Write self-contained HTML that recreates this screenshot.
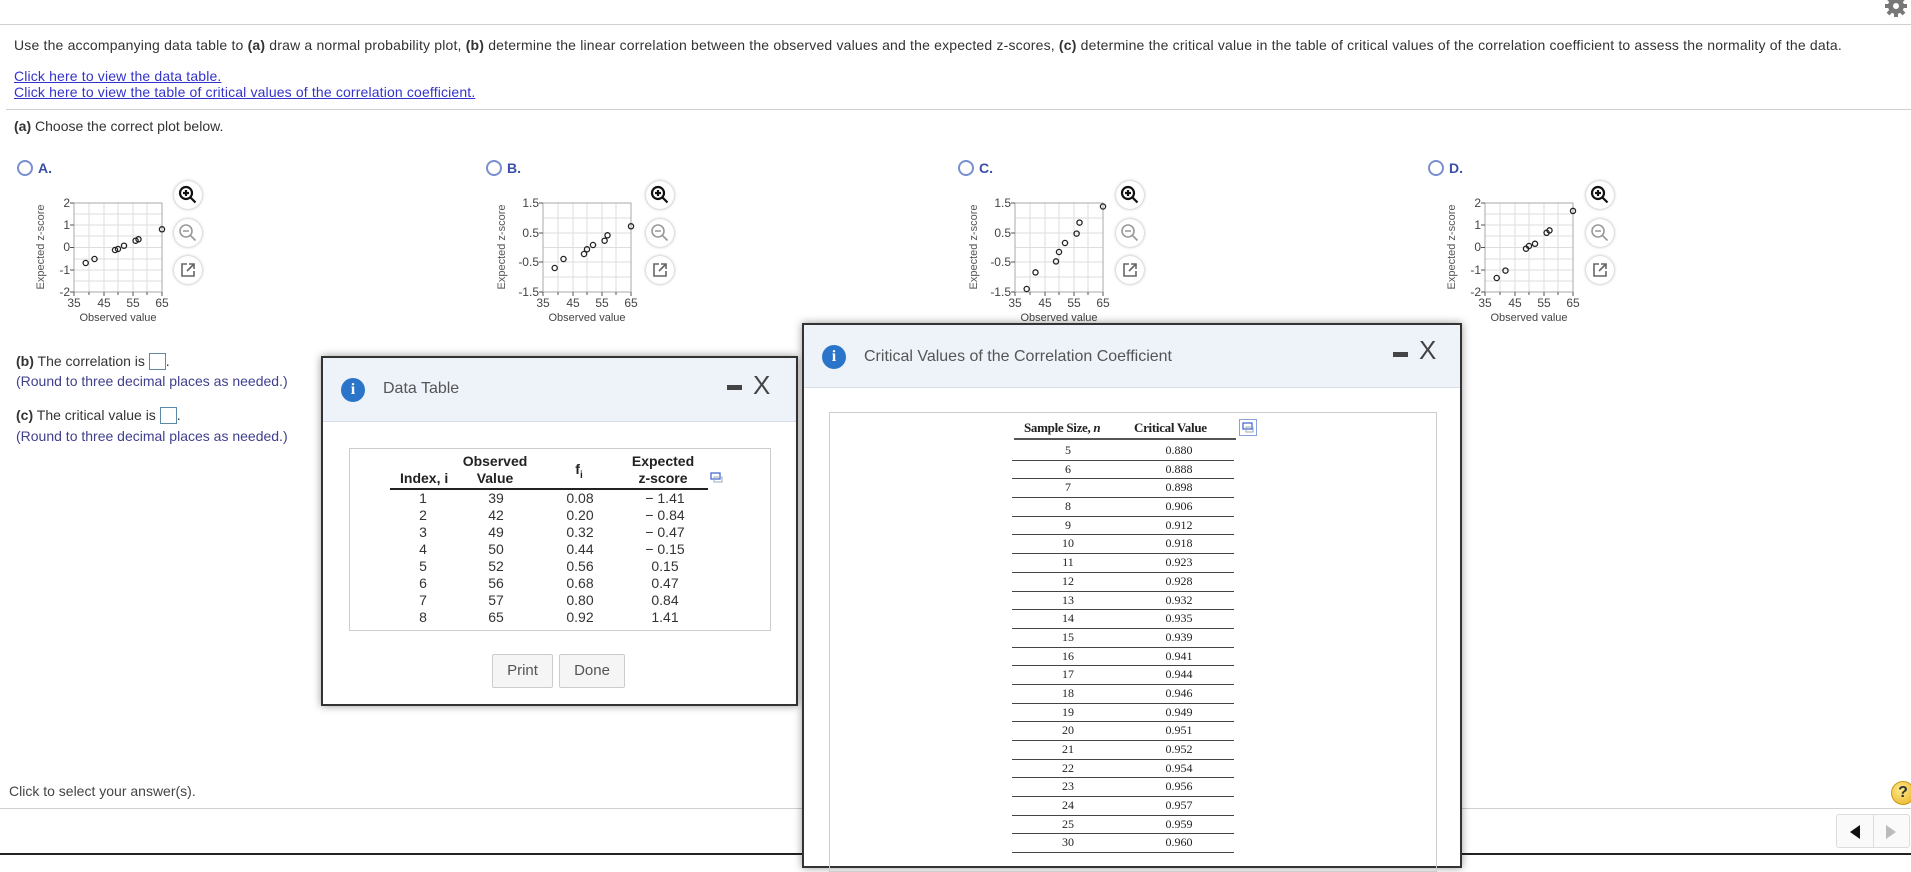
<!DOCTYPE html>
<html><head><meta charset="utf-8">
<style>
*{box-sizing:border-box;margin:0;padding:0}
body{width:1911px;height:855px;overflow:hidden;background:#fff;font-family:"Liberation Sans",Arial,sans-serif;color:#333;position:relative}
.a{position:absolute;white-space:nowrap}
.t{font-size:14px;line-height:16px}
.lnk{color:#3333cc;text-decoration:underline;font-size:14px;letter-spacing:0.15px}
.rd{position:absolute;width:16px;height:16px;border:2px solid #7a8fd0;border-radius:50%}
.ol{position:absolute;font-size:14px;font-weight:bold;color:#3b4fa8}
.ic{position:absolute;width:28px;height:28px;border-radius:50%;background:#fff;box-shadow:0 0 3px rgba(0,0,0,.35)}
.ic svg{position:absolute;left:0;top:0}
.dlg{position:absolute;background:#fff;border:2px solid #333;box-shadow:0 0 8px rgba(0,0,0,.4)}
.hd{position:absolute;left:0;right:0;top:0;background:#eef3fa;border-bottom:1px solid #d6dde8}
.info{position:absolute;width:24px;height:24px;border-radius:50%;background:#2a75c9;color:#fff;font:bold 16px/24px "Liberation Serif",serif;text-align:center}
.dt td{font-size:14px;line-height:17px;text-align:center;padding:0}
.btn{position:absolute;background:#f5f5f5;border:1px solid #ccc;border-radius:2px;font-size:15px;color:#555;text-align:center;line-height:32px}
.cr{height:18.7px;border-bottom:1px solid #444;display:flex;line-height:17px}
.cr span:first-child{width:112px;text-align:center}
.cr span:last-child{width:110px;text-align:center}
</style></head><body>

<svg class="a" style="left:1884px;top:-6px" width="24" height="24" viewBox="0 0 24 24"><circle cx="12" cy="12" r="8" fill="#777"/><g stroke="#777" stroke-width="4"><line x1="12" y1="1" x2="12" y2="23"/><line x1="1" y1="12" x2="23" y2="12"/><line x1="4" y1="4" x2="20" y2="20"/><line x1="20" y1="4" x2="4" y2="20"/></g><circle cx="12" cy="12" r="3" fill="#fff"/></svg>

<div class="a" style="left:0;top:24px;width:1911px;height:1px;background:#d0d0d0"></div>
<div class="a t" style="left:14px;top:37px;font-size:14px;letter-spacing:0.18px">Use the accompanying data table to <b>(a)</b> draw a normal probability plot, <b>(b)</b> determine the linear correlation between the observed values and the expected z-scores, <b>(c)</b> determine the critical value in the table of critical values of the correlation coefficient to assess the normality of the data.</div>
<div class="a lnk" style="left:14px;top:68px">Click here to view the data table.</div>
<div class="a lnk" style="left:14px;top:84px">Click here to view the table of critical values of the correlation coefficient.</div>
<div class="a" style="left:6px;top:109px;width:1905px;height:1px;background:#d0d0d0"></div>
<div class="a t" style="left:14px;top:118px"><b>(a)</b> Choose the correct plot below.</div>

<div class="rd" style="left:17px;top:160px"></div><div class="ol" style="left:38px;top:160px">A.</div>
<div class="rd" style="left:486px;top:160px"></div><div class="ol" style="left:507px;top:160px">B.</div>
<div class="rd" style="left:958px;top:160px"></div><div class="ol" style="left:979px;top:160px">C.</div>
<div class="rd" style="left:1428px;top:160px"></div><div class="ol" style="left:1449px;top:160px">D.</div>

<svg class="a" style="left:14px;top:150px" width="170" height="175" font-family="Liberation Sans,Arial,sans-serif">
<g stroke="#ddd"><path d="M75 53V142M90 53V142M104 53V142M119 53V142M133 53V142M60 64H148M60 75H148M60 86H148M60 97.5H148M60 109H148M60 120H148M60 131H148"/></g>
<rect x="60" y="53" width="88" height="89" fill="none" stroke="#aaa"/>
<path d="M56 53H60M56 75H60M56 97.5H60M56 120H60M56 142H60M60 142V146M75 142V145M90 142V146M104 142V145M119 142V146M133 142V145M148 142V146" stroke="#555"/>
<g font-size="12" fill="#444" text-anchor="end"><text x="56" y="57">2</text><text x="56" y="79">1</text><text x="56" y="101">0</text><text x="56" y="124">-1</text><text x="56" y="146">-2</text></g>
<g font-size="12" fill="#444" text-anchor="middle"><text x="60" y="157">35</text><text x="90" y="157">45</text><text x="119" y="157">55</text><text x="148" y="157">65</text><text x="104" y="171" font-size="11">Observed value</text></g>
<text transform="translate(30,97) rotate(-90)" font-size="11" fill="#555" text-anchor="middle">Expected z-score</text>
<g fill="none" stroke="#222" stroke-width="1.3"><circle cx="71.7" cy="113" r="2.6"/><circle cx="80.5" cy="109" r="2.6"/><circle cx="101" cy="100" r="2.6"/><circle cx="104" cy="99" r="2.6"/><circle cx="110" cy="95.7" r="2.6"/><circle cx="121.6" cy="90.7" r="2.6"/><circle cx="124.5" cy="89.3" r="2.6"/><circle cx="148" cy="79.3" r="2.6"/></g>
</svg>

<svg class="a" style="left:483px;top:150px" width="170" height="175" font-family="Liberation Sans,Arial,sans-serif">
<g stroke="#ddd"><path d="M75 53V142M90 53V142M104 53V142M119 53V142M133 53V142M60 68H148M60 83H148M60 97.5H148M60 112H148M60 127H148"/></g>
<rect x="60" y="53" width="88" height="89" fill="none" stroke="#aaa"/>
<path d="M56 53H60M56 83H60M56 112H60M56 142H60M60 142V146M75 142V145M90 142V146M104 142V145M119 142V146M133 142V145M148 142V146" stroke="#555"/>
<g font-size="12" fill="#444" text-anchor="end"><text x="56" y="57">1.5</text><text x="56" y="87">0.5</text><text x="56" y="116">-0.5</text><text x="56" y="146">-1.5</text></g>
<g font-size="12" fill="#444" text-anchor="middle"><text x="60" y="157">35</text><text x="90" y="157">45</text><text x="119" y="157">55</text><text x="148" y="157">65</text><text x="104" y="171" font-size="11">Observed value</text></g>
<text transform="translate(22,97) rotate(-90)" font-size="11" fill="#555" text-anchor="middle">Expected z-score</text>
<g fill="none" stroke="#222" stroke-width="1.3"><circle cx="71.7" cy="118" r="2.6"/><circle cx="80.5" cy="109" r="2.6"/><circle cx="101" cy="104" r="2.6"/><circle cx="104" cy="99.3" r="2.6"/><circle cx="110" cy="95" r="2.6"/><circle cx="121.6" cy="90.7" r="2.6"/><circle cx="124.5" cy="85.3" r="2.6"/><circle cx="148" cy="76.3" r="2.6"/></g>
</svg>

<svg class="a" style="left:955px;top:150px" width="170" height="175" font-family="Liberation Sans,Arial,sans-serif">
<g stroke="#ddd"><path d="M75 53V142M90 53V142M104 53V142M119 53V142M133 53V142M60 68H148M60 83H148M60 97.5H148M60 112H148M60 127H148"/></g>
<rect x="60" y="53" width="88" height="89" fill="none" stroke="#aaa"/>
<path d="M56 53H60M56 83H60M56 112H60M56 142H60M60 142V146M75 142V145M90 142V146M104 142V145M119 142V146M133 142V145M148 142V146" stroke="#555"/>
<g font-size="12" fill="#444" text-anchor="end"><text x="56" y="57">1.5</text><text x="56" y="87">0.5</text><text x="56" y="116">-0.5</text><text x="56" y="146">-1.5</text></g>
<g font-size="12" fill="#444" text-anchor="middle"><text x="60" y="157">35</text><text x="90" y="157">45</text><text x="119" y="157">55</text><text x="148" y="157">65</text><text x="104" y="171" font-size="11">Observed value</text></g>
<text transform="translate(22,97) rotate(-90)" font-size="11" fill="#555" text-anchor="middle">Expected z-score</text>
<g fill="none" stroke="#222" stroke-width="1.3"><circle cx="71.7" cy="139" r="2.6"/><circle cx="80.5" cy="122.4" r="2.6"/><circle cx="101" cy="111.4" r="2.6"/><circle cx="104" cy="102" r="2.6"/><circle cx="110" cy="93" r="2.6"/><circle cx="121.6" cy="83.6" r="2.6"/><circle cx="124.5" cy="72.6" r="2.6"/><circle cx="148" cy="56.5" r="2.6"/></g>
</svg>

<svg class="a" style="left:1425px;top:150px" width="170" height="175" font-family="Liberation Sans,Arial,sans-serif">
<g stroke="#ddd"><path d="M75 53V142M90 53V142M104 53V142M119 53V142M133 53V142M60 64H148M60 75H148M60 86H148M60 97.5H148M60 109H148M60 120H148M60 131H148"/></g>
<rect x="60" y="53" width="88" height="89" fill="none" stroke="#aaa"/>
<path d="M56 53H60M56 75H60M56 97.5H60M56 120H60M56 142H60M60 142V146M75 142V145M90 142V146M104 142V145M119 142V146M133 142V145M148 142V146" stroke="#555"/>
<g font-size="12" fill="#444" text-anchor="end"><text x="56" y="57">2</text><text x="56" y="79">1</text><text x="56" y="101">0</text><text x="56" y="124">-1</text><text x="56" y="146">-2</text></g>
<g font-size="12" fill="#444" text-anchor="middle"><text x="60" y="157">35</text><text x="90" y="157">45</text><text x="119" y="157">55</text><text x="148" y="157">65</text><text x="104" y="171" font-size="11">Observed value</text></g>
<text transform="translate(30,97) rotate(-90)" font-size="11" fill="#555" text-anchor="middle">Expected z-score</text>
<g fill="none" stroke="#222" stroke-width="1.3"><circle cx="71.7" cy="128" r="2.6"/><circle cx="80.5" cy="120.6" r="2.6"/><circle cx="101" cy="98.7" r="2.6"/><circle cx="104" cy="96" r="2.6"/><circle cx="110" cy="93.8" r="2.6"/><circle cx="121.6" cy="82.8" r="2.6"/><circle cx="124.5" cy="80.4" r="2.6"/><circle cx="148" cy="60.9" r="2.6"/></g>
</svg>

<div class="ic" style="left:174px;top:181px"><svg width="28" height="28"><circle cx="12" cy="12" r="6" fill="none" stroke="#111" stroke-width="2.2"/><path d="M16.5 16.5L21.5 21.5M9 12H15M12 9V15" stroke="#111" stroke-width="2.2"/></svg></div>
<div class="ic" style="left:174px;top:219px"><svg width="28" height="28"><circle cx="12" cy="12" r="6" fill="none" stroke="#999" stroke-width="1.6"/><path d="M16.5 16.5L21.5 21.5M9 12H15" stroke="#999" stroke-width="1.6"/></svg></div>
<div class="ic" style="left:174px;top:256px"><svg width="28" height="28"><path d="M13 8H8V20H20V15M15 8H20V13M20 8L13 15" fill="none" stroke="#666" stroke-width="1.6"/></svg></div>

<div class="ic" style="left:646px;top:181px"><svg width="28" height="28"><circle cx="12" cy="12" r="6" fill="none" stroke="#111" stroke-width="2.2"/><path d="M16.5 16.5L21.5 21.5M9 12H15M12 9V15" stroke="#111" stroke-width="2.2"/></svg></div>
<div class="ic" style="left:646px;top:219px"><svg width="28" height="28"><circle cx="12" cy="12" r="6" fill="none" stroke="#999" stroke-width="1.6"/><path d="M16.5 16.5L21.5 21.5M9 12H15" stroke="#999" stroke-width="1.6"/></svg></div>
<div class="ic" style="left:646px;top:256px"><svg width="28" height="28"><path d="M13 8H8V20H20V15M15 8H20V13M20 8L13 15" fill="none" stroke="#666" stroke-width="1.6"/></svg></div>

<div class="ic" style="left:1116px;top:181px"><svg width="28" height="28"><circle cx="12" cy="12" r="6" fill="none" stroke="#111" stroke-width="2.2"/><path d="M16.5 16.5L21.5 21.5M9 12H15M12 9V15" stroke="#111" stroke-width="2.2"/></svg></div>
<div class="ic" style="left:1116px;top:219px"><svg width="28" height="28"><circle cx="12" cy="12" r="6" fill="none" stroke="#999" stroke-width="1.6"/><path d="M16.5 16.5L21.5 21.5M9 12H15" stroke="#999" stroke-width="1.6"/></svg></div>
<div class="ic" style="left:1116px;top:256px"><svg width="28" height="28"><path d="M13 8H8V20H20V15M15 8H20V13M20 8L13 15" fill="none" stroke="#666" stroke-width="1.6"/></svg></div>

<div class="ic" style="left:1586px;top:181px"><svg width="28" height="28"><circle cx="12" cy="12" r="6" fill="none" stroke="#111" stroke-width="2.2"/><path d="M16.5 16.5L21.5 21.5M9 12H15M12 9V15" stroke="#111" stroke-width="2.2"/></svg></div>
<div class="ic" style="left:1586px;top:219px"><svg width="28" height="28"><circle cx="12" cy="12" r="6" fill="none" stroke="#999" stroke-width="1.6"/><path d="M16.5 16.5L21.5 21.5M9 12H15" stroke="#999" stroke-width="1.6"/></svg></div>
<div class="ic" style="left:1586px;top:256px"><svg width="28" height="28"><path d="M13 8H8V20H20V15M15 8H20V13M20 8L13 15" fill="none" stroke="#666" stroke-width="1.6"/></svg></div>

<div class="a t" style="left:16px;top:353px"><b>(b)</b> The correlation is <span style="display:inline-block;width:17px;height:17px;border:1px solid #5a8aa8;vertical-align:-4px"></span>.</div>
<div class="a t" style="left:16px;top:373px;color:#3f3f8f">(Round to three decimal places as needed.)</div>
<div class="a t" style="left:16px;top:407px"><b>(c)</b> The critical value is <span style="display:inline-block;width:17px;height:17px;border:1px solid #5a8aa8;vertical-align:-4px"></span>.</div>
<div class="a t" style="left:16px;top:428px;color:#3f3f8f">(Round to three decimal places as needed.)</div>
<div class="a t" style="left:9px;top:783px;color:#444">Click to select your answer(s).</div>

<div class="a" style="left:0;top:808px;width:1911px;height:1px;background:#d0d0d0"></div>
<div class="a" style="left:1891px;top:781px;width:24px;height:24px;border-radius:50%;background:radial-gradient(circle at 40% 35%,#ffe98a,#e8b020);border:1px solid #c99a18;font:bold 16px/22px 'Liberation Sans',sans-serif;color:#333;text-align:center">?</div>
<div class="a" style="left:1836px;top:814px;width:74px;height:34px;border:1px solid #ddd;border-radius:3px;background:#fafafa"></div>
<div class="a" style="left:1873px;top:815px;width:1px;height:32px;background:#ddd"></div>
<svg class="a" style="left:1846px;top:822px" width="60" height="20"><path d="M14 3L4 10L14 17Z" fill="#111"/><path d="M40 3L50 10L40 17Z" fill="#bbb"/></svg>
<div class="a" style="left:0;top:853px;width:1911px;height:2px;background:#222"></div>

<div class="dlg" style="left:321px;top:356px;width:477px;height:350px">
 <div class="hd" style="height:64px"></div>
 <div class="info" style="left:18px;top:20px">i</div>
 <div class="a" style="left:60px;top:22px;font-size:16px;color:#555">Data Table</div>
 <div class="a" style="left:404px;top:27px;width:15px;height:5px;background:#444"></div>
 <div class="a" style="left:430px;top:12px;font-size:26px;color:#444">X</div>
 <div class="a" style="left:26px;top:90px;width:422px;height:183px;border:1px solid #ccc"></div>
 <div class="a" style="left:67px;top:130px;width:318px;height:1.5px;background:#222"></div>
 <div class="a" style="left:0;top:96px;width:477px">
  <div class="a" style="left:77px;top:16px;width:46px;text-align:center;font-weight:bold;font-size:14px;color:#222">Index, i</div>
  <div class="a" style="left:132px;top:-1px;width:80px;text-align:center;font-weight:bold;font-size:14px;line-height:17px;color:#222">Observed<br>Value</div>
  <div class="a" style="left:246px;top:7px;width:20px;text-align:center;font-weight:bold;font-size:14px;color:#222">f<sub style="font-size:10px">i</sub></div>
  <div class="a" style="left:300px;top:-1px;width:80px;text-align:center;font-weight:bold;font-size:14px;line-height:17px;color:#222">Expected<br>z-score</div>
  <svg class="a" style="left:387px;top:18px" width="14" height="12"><rect x="1" y="1" width="9" height="6" fill="none" stroke="#4a6bd0" stroke-width="1.3"/><rect x="4" y="5" width="8" height="5" fill="none" stroke="#9ab" stroke-width="1"/></svg>
 </div>
 <table class="dt a" style="left:80px;top:132px;border-collapse:collapse;color:#333">
  <tr><td style="width:40px">1</td><td style="width:106px">39</td><td style="width:62px">0.08</td><td style="width:108px">&minus; 1.41</td></tr>
  <tr><td>2</td><td>42</td><td>0.20</td><td>&minus; 0.84</td></tr>
  <tr><td>3</td><td>49</td><td>0.32</td><td>&minus; 0.47</td></tr>
  <tr><td>4</td><td>50</td><td>0.44</td><td>&minus; 0.15</td></tr>
  <tr><td>5</td><td>52</td><td>0.56</td><td>0.15</td></tr>
  <tr><td>6</td><td>56</td><td>0.68</td><td>0.47</td></tr>
  <tr><td>7</td><td>57</td><td>0.80</td><td>0.84</td></tr>
  <tr><td>8</td><td>65</td><td>0.92</td><td>1.41</td></tr>
 </table>
 <div class="btn" style="left:169px;top:296px;width:61px;height:34px">Print</div>
 <div class="btn" style="left:236px;top:296px;width:66px;height:34px">Done</div>
</div>

<div class="dlg" style="left:802px;top:323px;width:660px;height:545px">
 <div class="hd" style="height:63px"></div>
 <div class="info" style="left:18px;top:20px">i</div>
 <div class="a" style="left:60px;top:23px;font-size:16px;color:#555">Critical Values of the Correlation Coefficient</div>
 <div class="a" style="left:589px;top:27px;width:15px;height:5px;background:#444"></div>
 <div class="a" style="left:615px;top:10px;font-size:26px;color:#444">X</div>
 <div class="a" style="left:25px;top:87px;width:608px;height:460px;border:1px solid #ccc"></div>
 <div class="a" style="left:220px;top:95px;font:bold 13px 'Liberation Serif',serif;color:#222;letter-spacing:-0.3px">Sample Size, <i>n</i></div>
 <div class="a" style="left:330px;top:95px;font:bold 13px 'Liberation Serif',serif;color:#222;letter-spacing:-0.3px">Critical Value</div>
 <svg class="a" style="left:435px;top:94px" width="18" height="17"><rect x="0.5" y="0.5" width="17" height="16" fill="#fff" stroke="#8aa0e0"/><rect x="4" y="4" width="9" height="6" fill="none" stroke="#4a6bd0" stroke-width="1.3"/><rect x="7" y="8" width="7" height="5" fill="none" stroke="#9ab"/></svg>
 <div class="a" style="left:210px;top:113px;width:222px;height:1.5px;background:#555"></div>
</div>
<div class="a" style="left:1012px;top:442px;width:222px;font-family:'Liberation Serif',serif;font-size:12px;color:#222">
<div class="cr"><span>5</span><span>0.880</span></div>
<div class="cr"><span>6</span><span>0.888</span></div>
<div class="cr"><span>7</span><span>0.898</span></div>
<div class="cr"><span>8</span><span>0.906</span></div>
<div class="cr"><span>9</span><span>0.912</span></div>
<div class="cr"><span>10</span><span>0.918</span></div>
<div class="cr"><span>11</span><span>0.923</span></div>
<div class="cr"><span>12</span><span>0.928</span></div>
<div class="cr"><span>13</span><span>0.932</span></div>
<div class="cr"><span>14</span><span>0.935</span></div>
<div class="cr"><span>15</span><span>0.939</span></div>
<div class="cr"><span>16</span><span>0.941</span></div>
<div class="cr"><span>17</span><span>0.944</span></div>
<div class="cr"><span>18</span><span>0.946</span></div>
<div class="cr"><span>19</span><span>0.949</span></div>
<div class="cr"><span>20</span><span>0.951</span></div>
<div class="cr"><span>21</span><span>0.952</span></div>
<div class="cr"><span>22</span><span>0.954</span></div>
<div class="cr"><span>23</span><span>0.956</span></div>
<div class="cr"><span>24</span><span>0.957</span></div>
<div class="cr"><span>25</span><span>0.959</span></div>
<div class="cr"><span>30</span><span>0.960</span></div>
</div>

</body></html>
